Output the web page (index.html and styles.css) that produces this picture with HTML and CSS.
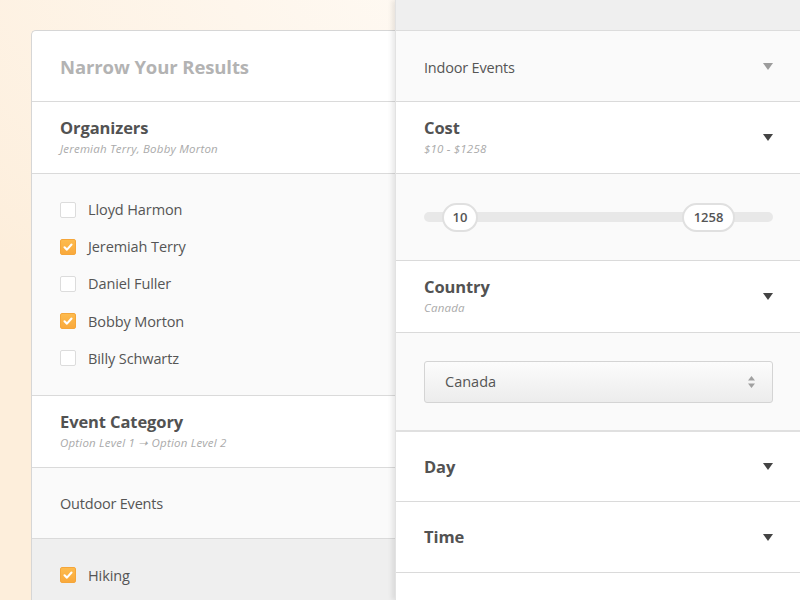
FILE: index.html
```html
<!DOCTYPE html>
<html>
<head>
<meta charset="utf-8">
<link rel="stylesheet" href="styles.css">
</head>
<body>
<div class="page">
  <div class="left-col">
    <div class="card">
      <div class="card-head"><h1>Narrow Your Results</h1></div>
      <div class="sec white">
        <div class="sec-text">
          <div class="title">Organizers</div>
          <div class="sub">Jeremiah Terry, Bobby Morton</div>
        </div>
      </div>
      <div class="list">
        <label class="item"><span class="cb"></span><span>Lloyd Harmon</span></label>
        <label class="item"><span class="cb on"><svg viewBox="0 0 16 16"><path d="M4 8.3 6.8 11 12 5.2" fill="none" stroke="#fff" stroke-width="2.4" stroke-linecap="round" stroke-linejoin="round"/></svg></span><span>Jeremiah Terry</span></label>
        <label class="item"><span class="cb"></span><span>Daniel Fuller</span></label>
        <label class="item"><span class="cb on"><svg viewBox="0 0 16 16"><path d="M4 8.3 6.8 11 12 5.2" fill="none" stroke="#fff" stroke-width="2.4" stroke-linecap="round" stroke-linejoin="round"/></svg></span><span>Bobby Morton</span></label>
        <label class="item"><span class="cb"></span><span>Billy Schwartz</span></label>
      </div>
      <div class="sec white">
        <div class="sec-text">
          <div class="title">Event Category</div>
          <div class="sub">Option Level 1 &#10141; Option Level 2</div>
        </div>
      </div>
      <div class="sec grey short">
        <div class="plain">Outdoor Events</div>
      </div>
      <div class="sec dark">
        <label class="item"><span class="cb on"><svg viewBox="0 0 16 16"><path d="M4 8.3 6.8 11 12 5.2" fill="none" stroke="#fff" stroke-width="2.4" stroke-linecap="round" stroke-linejoin="round"/></svg></span><span>Hiking</span></label>
      </div>
    </div>
  </div>
  <div class="panel">
    <div class="panel-top"></div>
    <div class="rsec grey h71">
      <div class="plain">Indoor Events</div>
      <svg class="arrow light" viewBox="0 0 10 7"><path d="M0 0h10L5 7z"/></svg>
    </div>
    <div class="rsec white">
      <div class="sec-text">
        <div class="title">Cost</div>
        <div class="sub">$10 - $1258</div>
      </div>
      <svg class="arrow" viewBox="0 0 10 7"><path d="M0 0h10L5 7z"/></svg>
    </div>
    <div class="rsec grey slider-sec">
      <div class="track">
        <span class="knob k1">10</span>
        <span class="knob k2">1258</span>
      </div>
    </div>
    <div class="rsec white">
      <div class="sec-text">
        <div class="title">Country</div>
        <div class="sub">Canada</div>
      </div>
      <svg class="arrow" viewBox="0 0 10 7"><path d="M0 0h10L5 7z"/></svg>
    </div>
    <div class="rsec grey select-sec">
      <div class="select">
        <span>Canada</span>
        <svg class="updown" viewBox="0 0 7 12"><path d="M3.5 0 7 4.5H0z M0 7.5h7L3.5 12z"/></svg>
      </div>
    </div>
    <div class="rsec white h70">
      <div class="title">Day</div>
      <svg class="arrow" viewBox="0 0 10 7"><path d="M0 0h10L5 7z"/></svg>
    </div>
    <div class="rsec white h71">
      <div class="title">Time</div>
      <svg class="arrow" viewBox="0 0 10 7"><path d="M0 0h10L5 7z"/></svg>
    </div>
    <div class="panel-rest"></div>
  </div>
</div>
</body>
</html>
```

FILE: styles.css
```css
* { box-sizing: border-box; }
html, body { margin: 0; padding: 0; height: 100%; }
body {
  font-family: "Open Sans", "Lato", sans-serif;
  color: #555;
  background: radial-gradient(ellipse 120% 90% at 75% -10%, #fffdfa 0%, #fef6ec 40%, #fdeedb 85%);
  overflow: hidden;
}
.page {
  display: flex;
  width: 800px;
  height: 600px;
}
.left-col {
  width: 395px;
  padding: 30px 0 0 31px;
  flex: none;
}
.card {
  background: #fff;
  border-top: 1px solid #d6d6d6;
  border-left: 1px solid #d6d6d6;
  border-top-left-radius: 5px;
  height: 100%;
  margin-right: -4px;
  overflow: hidden;
  display: flex;
  flex-direction: column;
}
.card-head {
  height: 71px;
  flex: none;
  display: flex;
  align-items: center;
  padding-left: 28px;
  border-bottom: 1px solid #dadada;
}
.card-head h1 {
  margin: 0;
  font-size: 18.5px;
  font-weight: 700;
  color: #b3b3b3;
  letter-spacing: -0.1px;
}
.sec {
  height: 72px;
  flex: none;
  display: flex;
  align-items: center;
  padding-left: 28px;
  border-bottom: 1px solid #dadada;
}
.sec.short { height: 71px; }
.white { background: #fff; }
.grey { background: #fafafa; }
.sec.dark {
  background: #efefef;
  border-bottom: none;
  height: auto;
  flex: 1;
  padding-top: 28px;
  align-items: flex-start;
}
.sec-text { display: flex; flex-direction: column; margin-top: -2px; }
.title {
  font-size: 16.5px;
  font-weight: 700;
  color: #525252;
  line-height: 20px;
  letter-spacing: -0.1px;
}
.sub {
  font-size: 11.5px;
  font-style: italic;
  color: #aaa;
  line-height: 14px;
  margin-top: 4px;
  letter-spacing: 0.2px;
}
.plain {
  font-size: 14.5px;
  color: #555;
  letter-spacing: -0.2px;
}
.list {
  background: #fafafa;
  border-bottom: 1px solid #dadada;
  padding: 17px 0 20px 28px;
  height: 222px;
  flex: none;
  display: flex;
  flex-direction: column;
}
.item {
  height: 37.2px;
  flex: none;
  display: flex;
  align-items: center;
  gap: 12px;
  font-size: 14.5px;
  color: #555;
  letter-spacing: -0.1px;
}
.dark .item { height: 16px; }
.cb {
  width: 16px;
  height: 16px;
  border: 1px solid #dcdcdc;
  border-radius: 2px;
  background: #fff;
  flex: none;
  display: flex;
}
.cb.on {
  border-color: #f5a63a;
  background: linear-gradient(#fdbb4e, #f9a93c);
}
.cb svg { width: 14px; height: 14px; }
.panel {
  width: 405px;
  flex: none;
  background: #fff;
  border-left: 1px solid #e2e2e2;
  box-shadow: -3px 0 5px rgba(0,0,0,0.09);
  display: flex;
  flex-direction: column;
  position: relative;
  z-index: 1;
}
.panel-top {
  height: 31px;
  background: #efefef;
  border-bottom: 1px solid #dcdcdc;
  flex: none;
}
.rsec {
  height: 72px;
  flex: none;
  display: flex;
  align-items: center;
  justify-content: space-between;
  padding: 0 27px 0 28px;
  border-bottom: 1px solid #dadada;
}
.rsec.h71 { height: 71px; }
.rsec.h70 { height: 70px; }
.rsec .plain { margin-top: 2px; }
.arrow { width: 10px; height: 7px; fill: #444; flex: none; }
.arrow.light { fill: #9c9c9c; }
.slider-sec { height: 87px; }
.track {
  width: 349px;
  height: 10px;
  border-radius: 5px;
  background: #e8e8e8;
  display: flex;
  align-items: center;
}
.knob {
  height: 29px;
  border: 2px solid #e0e0e0;
  border-radius: 15px;
  background: #fff;
  display: flex;
  align-items: center;
  justify-content: center;
  font-size: 13px;
  font-weight: 600;
  color: #555;
  flex: none;
}
.k1 { width: 36px; margin-left: 18px; }
.k2 { width: 53px; margin-left: auto; margin-right: 38px; }
.select-sec { height: 99px; border-bottom: 2px solid #e0e0e0; }
.select {
  width: 349px;
  height: 42px;
  border: 1px solid #d4d4d4;
  border-radius: 3px;
  background: linear-gradient(#fcfcfc, #ececec);
  display: flex;
  align-items: center;
  justify-content: space-between;
  padding: 0 17px 0 20px;
  font-size: 14.5px;
  color: #555;
}
.updown { width: 7px; height: 12px; fill: #a0a0a0; }
.panel-rest { flex: 1; background: #fff; }
```
